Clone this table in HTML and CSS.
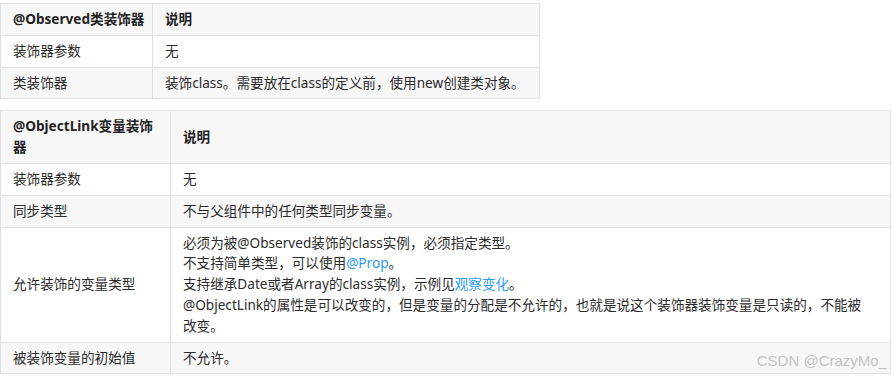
FILE: index.html
```html
<!DOCTYPE html>
<html lang="zh-CN">
<head>
<meta charset="utf-8">
<title>Observed / ObjectLink</title>
<link rel="stylesheet" href="styles.css">
</head>
<body>
<div class="page">
  <table class="doc-table t1">
    <colgroup><col class="c1a"><col class="c1b"></colgroup>
    <thead>
      <tr><th class="nowrap">@Observed类装饰器</th><th>说明</th></tr>
    </thead>
    <tbody>
      <tr><td>装饰器参数</td><td>无</td></tr>
      <tr><td>类装饰器</td><td>装饰class。需要放在class的定义前，使用new创建类对象。</td></tr>
    </tbody>
  </table>

  <table class="doc-table t2">
    <colgroup><col class="c2a"><col class="c2b"></colgroup>
    <thead>
      <tr><th>@ObjectLink变量装饰器</th><th>说明</th></tr>
    </thead>
    <tbody>
      <tr><td>装饰器参数</td><td>无</td></tr>
      <tr><td>同步类型</td><td>不与父组件中的任何类型同步变量。</td></tr>
      <tr><td>允许装饰的变量类型</td><td>必须为被@Observed装饰的class实例，必须指定类型。<br>不支持简单类型，可以使用<a class="link" href="#">@Prop</a>。<br>支持继承Date或者Array的class实例，示例见<a class="link" href="#">观察变化</a>。<br>@ObjectLink的属性是可以改变的，但是变量的分配是不允许的，也就是说这个装饰器装饰变量是只读的，不能被改变。</td></tr>
      <tr><td>被装饰变量的初始值</td><td>不允许。</td></tr>
    </tbody>
  </table>
  <div class="watermark">CSDN @CrazyMo_</div>
</div>
</body>
</html>
```

FILE: styles.css
```css
html, body {
  margin: 0;
  padding: 0;
  background: #ffffff;
}

.page {
  position: relative;
  width: 892px;
  height: 376px;
  padding-top: 3px;
  box-sizing: border-box;
  display: flex;
  flex-direction: column;
  gap: 11px;
  font-family: "Noto Sans", "Noto Sans CJK SC", sans-serif;
  font-size: 13.6px;
  line-height: 20.8px;
  color: #2b2b2b;
}

.doc-table {
  border-collapse: collapse;
  table-layout: fixed;
}

.t1 { width: 540px; }
.t2 { width: 891px; }

.c1a { width: 152px; }
.c2a { width: 170px; }

.doc-table th,
.doc-table td {
  border: 1px solid #dfe1e4;
  padding: 5px 12px 5px 12px;
  text-align: left;
  vertical-align: middle;
}

.doc-table th {
  font-weight: 700;
  color: #1f1f1f;
  background: #f7f7f8;
}

.doc-table th.nowrap {
  white-space: nowrap;
  padding-right: 4px;
}

.t2 td:last-child {
  padding-right: 24px;
}

.doc-table tbody tr:nth-child(even) td {
  background: #f7f7f8;
}

.doc-table tbody tr:nth-child(odd) td {
  background: #ffffff;
}

.link {
  color: #2a9cf3;
  text-decoration: none;
}

.watermark {
  position: absolute;
  right: 5px;
  bottom: 7px;
  font-family: "Liberation Sans", Arial, sans-serif;
  font-size: 15px;
  line-height: 17px;
  color: #c3c3c3;
}
```
